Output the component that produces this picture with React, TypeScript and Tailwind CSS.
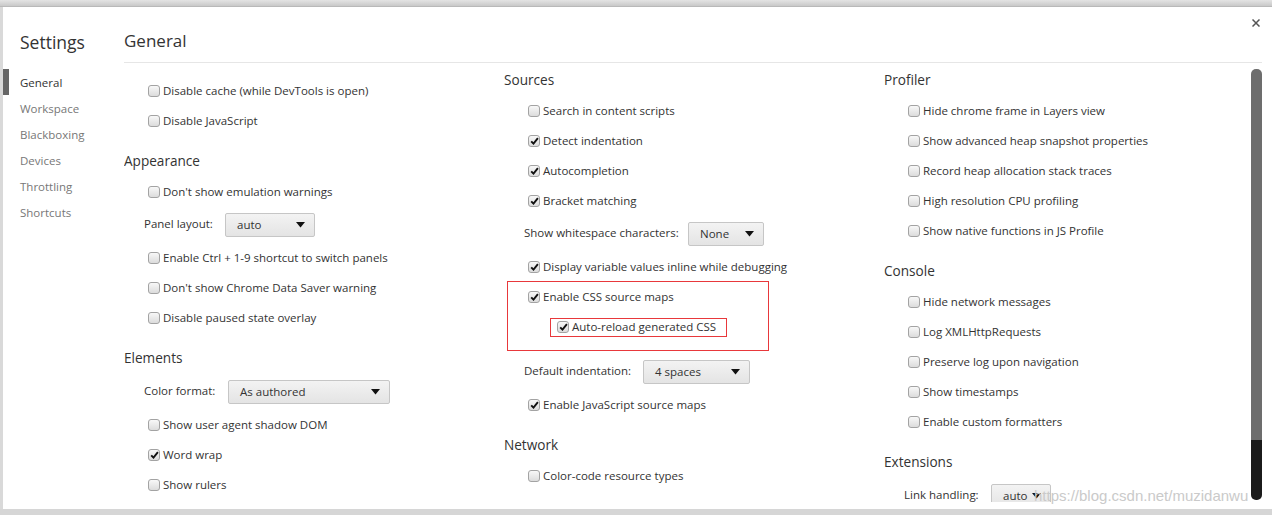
import React from "react";

const F = "font-['Open_Sans',sans-serif]";

function Check({ checked }: { checked?: boolean }) {
  return (
    <span className="w-[12px] h-[12px] rounded-[3px] border border-[#a3a3a3] bg-linear-to-b from-[#f8f8f8] to-[#dcdcdc] flex items-center justify-center shrink-0">
      {checked && (
        <svg width="9" height="8" viewBox="0 0 9 8">
          <path d="M1.2 4.3 L3.5 6.6 L7.9 1.2" stroke="#111" strokeWidth="1.9" fill="none" />
        </svg>
      )}
    </span>
  );
}

function Row({ label, checked }: { label: string; checked?: boolean }) {
  return (
    <div className="h-[30px] flex items-center pl-[24px] pt-[2px] gap-[3px] text-[11.5px] text-[#333] whitespace-nowrap">
      <Check checked={checked} />
      <span>{label}</span>
    </div>
  );
}

function Select({ value, w }: { value: string; w: string }) {
  return (
    <div className={`${w} h-[24px] mt-[2px] border border-[#c6c6c6] rounded-[2px] bg-linear-to-b from-[#f3f3f3] to-[#e4e4e4] flex items-center justify-between pl-[11px] pr-[9px] text-[11.5px] text-[#333]`}>
      <span>{value}</span>
      <svg width="9" height="6" viewBox="0 0 9 6">
        <path d="M0 0 L9 0 L4.5 5.5 Z" fill="#111" />
      </svg>
    </div>
  );
}

function SelectRow({ label, lw, value, sw }: { label: string; lw: string; value: string; sw: string }) {
  return (
    <div className="h-[36px] flex items-center pl-[20px] text-[11.5px] text-[#333] whitespace-nowrap">
      <span className={lw}>{label}</span>
      <Select value={value} w={sw} />
    </div>
  );
}

function Header({ title, first }: { title: string; first?: boolean }) {
  return (
    <div className={`h-[30px] flex items-center text-[13.6px] text-[#333] ${first ? "" : "mt-[11px]"}`}>{title}</div>
  );
}

export default function App() {
  return (
    <div className={`${F} w-[1272px] h-[515px] relative overflow-hidden bg-[#d6d6d6]`}>
      <div className="h-[7px] bg-linear-to-b from-[#e4e4e4] to-[#c9c9c9] border-b border-[#b9b9b9]" />
      <div className="flex">
        <div className="w-[3px] h-[502px] bg-[#d9d9d9]" />
        <div className="relative w-[1269px] h-[502px] bg-white flex">
          {/* sidebar */}
          <div className="w-[121px] shrink-0">
            <div className="h-[62px] pl-[17px] pt-[22px] text-[17.5px] leading-[26px] text-[#333]">Settings</div>
            {["General", "Workspace", "Blackboxing", "Devices", "Throttling", "Shortcuts"].map((t, i) => (
              <div
                key={t}
                className={`h-[26px] flex items-center pt-[1px] text-[11.5px] ${
                  i === 0 ? "border-l-[6px] border-[#666] pl-[11px] text-[#333]" : "pl-[17px] text-[#777]"
                }`}
              >
                {t}
              </div>
            ))}
          </div>
          {/* main */}
          <div className="w-[1138px] shrink-0">
            <div className="h-[56px] border-b border-[#e6e6e6] pt-[21px] text-[17px] leading-[26px] text-[#333]">General</div>
            <div className="h-[439px] overflow-hidden flex">
              <div className="w-[380px] shrink-0 pt-[12px]">
                <Row label="Disable cache (while DevTools is open)" />
                <Row label="Disable JavaScript" />
                <Header title="Appearance" />
                <Row label="Don't show emulation warnings" />
                <SelectRow label="Panel layout:" lw="w-[81px]" value="auto" sw="w-[90px]" />
                <Row label="Enable Ctrl + 1-9 shortcut to switch panels" />
                <Row label="Don't show Chrome Data Saver warning" />
                <Row label="Disable paused state overlay" />
                <Header title="Elements" />
                <SelectRow label="Color format:" lw="w-[84px]" value="As authored" sw="w-[162px]" />
                <Row label="Show user agent shadow DOM" />
                <Row label="Word wrap" checked />
                <Row label="Show rulers" />
              </div>
              <div className="w-[380px] shrink-0 pt-[2px]">
                <Header title="Sources" first />
                <Row label="Search in content scripts" />
                <Row label="Detect indentation" checked />
                <Row label="Autocompletion" checked />
                <Row label="Bracket matching" checked />
                <SelectRow label="Show whitespace characters:" lw="w-[164px]" value="None" sw="w-[76px]" />
                <Row label="Display variable values inline while debugging" checked />
                <div className="ml-[3px] w-[262px] border border-[#e8383b] pb-[8px] mb-[2px]">
                  <div className="h-[30px] flex items-center pl-[20px] gap-[3px] text-[11.5px] text-[#333] whitespace-nowrap">
                    <Check checked />
                    <span>Enable CSS source maps</span>
                  </div>
                  <div className="h-[30px] flex items-center pl-[42px]">
                    <div className="h-[19px] w-[177px] border border-[#e8383b] flex items-center pl-[6px] gap-[3px] text-[11.5px] text-[#333] whitespace-nowrap">
                      <Check checked />
                      <span>Auto-reload generated CSS</span>
                    </div>
                  </div>
                </div>
                <SelectRow label="Default indentation:" lw="w-[119px]" value="4 spaces" sw="w-[107px]" />
                <Row label="Enable JavaScript source maps" checked />
                <Header title="Network" />
                <Row label="Color-code resource types" />
              </div>
              <div className="w-[378px] shrink-0 pt-[2px]">
                <Header title="Profiler" first />
                <Row label="Hide chrome frame in Layers view" />
                <Row label="Show advanced heap snapshot properties" />
                <Row label="Record heap allocation stack traces" />
                <Row label="High resolution CPU profiling" />
                <Row label="Show native functions in JS Profile" />
                <Header title="Console" />
                <Row label="Hide network messages" />
                <Row label="Log XMLHttpRequests" />
                <Row label="Preserve log upon navigation" />
                <Row label="Show timestamps" />
                <Row label="Enable custom formatters" />
                <Header title="Extensions" />
                <SelectRow label="Link handling:" lw="w-[87px]" value="auto" sw="w-[60px]" />
              </div>
            </div>
          </div>
          {/* close */}
          <svg className="absolute top-[12px] right-[12px]" width="8" height="8" viewBox="0 0 8 8">
            <path d="M0.5 0.5 L7.5 7.5 M7.5 0.5 L0.5 7.5" stroke="#555" strokeWidth="1.5" />
          </svg>
          {/* scrollbar */}
          <div className="absolute left-[1248px] top-[62px] w-[11px] h-[431px] rounded-[5px] overflow-hidden flex flex-col">
            <div className="flex-1 bg-[#6d6d6d]" />
            <div className="h-[60px] bg-[#1b1b1b]" />
          </div>
        </div>
      </div>
      <div className="absolute left-[1034px] top-[485px] text-[15px] text-[#cacaca] font-['Liberation_Sans',sans-serif] whitespace-nowrap">
        https://blog.csdn.net/muzidanwu
      </div>
    </div>
  );
}
